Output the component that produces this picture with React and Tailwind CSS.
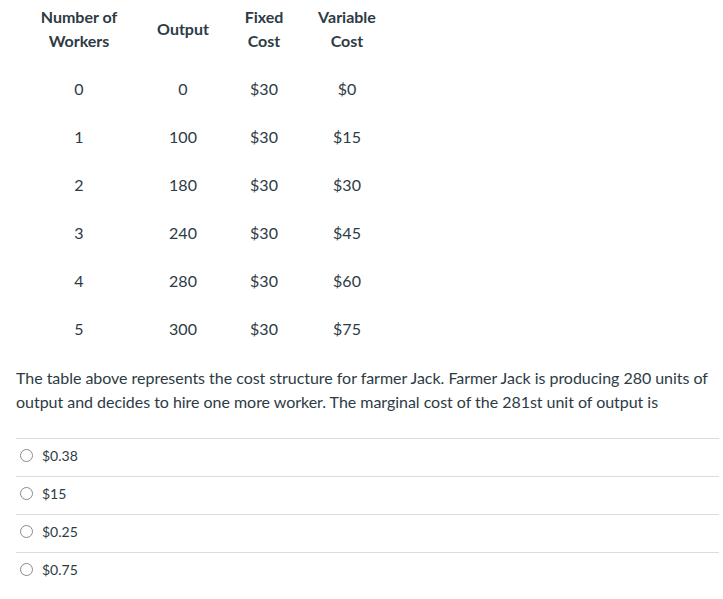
import React from 'react';

const rows = [
  ['0', '0', '$30', '$0'],
  ['1', '100', '$30', '$15'],
  ['2', '180', '$30', '$30'],
  ['3', '240', '$30', '$45'],
  ['4', '280', '$30', '$60'],
  ['5', '300', '$30', '$75'],
];

const options = ['$0.38', '$15', '$0.25', '$0.75'];

// column widths picked so each centre lands where the table's does
const cols = ['w-[98px]', 'w-[110px]', 'w-[52px]', 'w-[114px]'];

const App = () => {
  return (
    <div className="w-[723px] h-[599px] overflow-hidden bg-white text-[#2d3b45] font-['Lato','Liberation_Sans',sans-serif]">
      <div className="pt-[5px] pl-[30px]">
        <div className="flex h-[48px] items-center text-[16px] leading-[24px] font-bold">
          <div className={`${cols[0]} text-center`}>Number of<br />Workers</div>
          <div className={`${cols[1]} text-center`}>Output</div>
          <div className={`${cols[2]} text-center`}>Fixed<br />Cost</div>
          <div className={`${cols[3]} text-center`}>Variable<br />Cost</div>
        </div>
        <div className="mt-[12px]">
          {rows.map((row, i) => (
            <div key={i} className="flex h-[48px] items-center text-[16px] leading-[24px]">
              {row.map((cell, j) => (
                <div key={j} className={`${cols[j]} text-center`}>{cell}</div>
              ))}
            </div>
          ))}
        </div>
      </div>

      <p className="mt-[13px] pl-[16px] mr-[-8px] text-[16px] leading-[24px] tracking-[-0.03px]">
        The table above represents the cost structure for farmer Jack. Farmer Jack is producing 280 units of output and decides to hire one more worker. The marginal cost of the 281st unit of output is
      </p>

      <div className="mt-[24px] ml-[16px] mr-[4px]">
        {options.map((opt) => (
          <label key={opt} className="flex h-[38px] items-center gap-[9px] pb-[5px] border-t border-[#dcdcdc] text-[14px]">
            <span className="ml-[4px] w-[13px] h-[13px] rounded-full border border-[#8a8a8a] bg-white" />
            <span>{opt}</span>
          </label>
        ))}
      </div>
    </div>
  );
};

export default App;
